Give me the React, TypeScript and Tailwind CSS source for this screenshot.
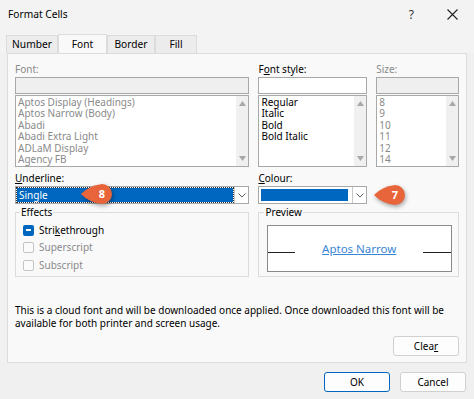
import React from "react";

const FONT = { fontFamily: '"Noto Sans", "Open Sans", sans-serif' };

function Scrollbar() {
  return (
    <div className="w-[12px] h-full bg-[#f0f0f0] flex flex-col items-center justify-between py-[5px]">
      <svg width="7" height="5" viewBox="0 0 7 5"><path d="M0 5 L3.5 0 L7 5 Z" fill="#a8a8a8" /></svg>
      <svg width="7" height="5" viewBox="0 0 7 5"><path d="M0 0 L3.5 5 L7 0 Z" fill="#a8a8a8" /></svg>
    </div>
  );
}

function ListBox({ items, dim }: { items: string[]; dim?: boolean }) {
  return (
    <div className="h-[72px] border border-[#a8a8a8] bg-white flex">
      <div className={`flex-1 pl-[2px] pt-[1px] leading-[11.4px] text-[10px] ${dim ? "text-[#8a8a8a]" : "text-black"}`}>
        {items.map((t) => (
          <div key={t} className="whitespace-nowrap">{t}</div>
        ))}
      </div>
      <Scrollbar />
    </div>
  );
}

function Chevron() {
  return (
    <div className="w-[14px] h-full bg-white border-l border-[#c8c8c8] flex items-center justify-center">
      <svg width="8" height="5" viewBox="0 0 8 5"><path d="M0.5 0.5 L4 4 L7.5 0.5" fill="none" stroke="#606060" strokeWidth="1" /></svg>
    </div>
  );
}

function Badge({ n, className }: { n: string; className: string }) {
  return (
    <div className={`absolute ${className} w-[32px] h-[20px]`}>
      <svg width="32" height="20" viewBox="0 0 32 20" className="absolute inset-0" style={{ filter: "drop-shadow(1px 2px 2px rgba(0,0,0,0.35))" }}>
        <path d="M0 10 Q 8 1.5 21 0 A 10 10 0 1 1 21 20 Q 8 18.5 0 10 Z" fill="#e8653b" />
      </svg>
      <span className="absolute left-[12px] top-0 w-[18px] h-[20px] flex items-center justify-center text-white text-[11px] font-bold">{n}</span>
    </div>
  );
}

function Label({ children, dim }: { children: React.ReactNode; dim?: boolean }) {
  return <div className={`h-[14px] text-[10px] leading-[14px] ${dim ? "text-[#8a8a8a]" : "text-black"}`}>{children}</div>;
}

export default function App() {
  return (
    <div className="w-[474px] h-[399px] bg-[#f0f0f0] relative overflow-hidden text-black" style={FONT}>
      {/* title */}
      <div className="h-[29px] flex items-center pl-[8px] pr-[16px] bg-[#f3f3f3]">
        <span className="text-[10.2px]">Format Cells</span>
        <div className="ml-auto flex items-center gap-[33px]">
          <span className="text-[12px] text-[#333]">?</span>
          <svg width="11" height="11" viewBox="0 0 11 11"><path d="M0.5 0.5 L10.5 10.5 M10.5 0.5 L0.5 10.5" stroke="#222" strokeWidth="1.1" /></svg>
        </div>
      </div>
      {/* tabs */}
      <div className="h-[24px] flex items-end pl-[6px] pt-[6px] bg-[#f3f3f3]">
        <div className="w-[52px] h-[18px] border border-[#dcdcdc] border-b-0 bg-[#ececec] text-[10.2px] flex items-center justify-center">Number</div>
        <div className="w-[49px] h-[20px] border border-[#dcdcdc] border-b-0 bg-[#f9f9f9] text-[10.2px] flex items-center justify-center relative top-[1px]">Font</div>
        <div className="w-[48px] h-[18px] border border-[#dcdcdc] border-b-0 bg-[#ececec] text-[10.2px] flex items-center justify-center">Border</div>
        <div className="w-[42px] h-[18px] border border-[#dcdcdc] border-b-0 bg-[#ececec] text-[10.2px] flex items-center justify-center">Fill</div>
      </div>
      {/* panel */}
      <div className="mx-[7px] h-[310px] border border-[#dcdcdc] bg-[#f9f9f9] pl-[7px] pr-[7px] pt-[8px] relative">
        <div className="flex gap-[9px]">
          <div className="w-[235px] flex flex-col">
            <Label dim>Font:</Label>
            <div className="mt-[1px] h-[17px] border border-[#a8a8a8] bg-[#efefef]" />
            <div className="mt-[1px]">
              <ListBox dim items={["Aptos Display (Headings)", "Aptos Narrow (Body)", "Abadi", "Abadi Extra Light", "ADLaM Display", "Agency FB"]} />
            </div>
            <div className="mt-[4px]"><Label><span className="underline">U</span>nderline:</Label></div>
            <div className="mt-[1px] h-[18px] border border-[#a8a8a8] bg-white flex">
              <div className="flex-1 m-[1px] bg-[#0067c0] text-white text-[10px] leading-[14px] pl-[2px] outline-1 outline-dotted outline-[#333]">Single</div>
              <Chevron />
            </div>
          </div>
          <div className="w-[109px] flex flex-col">
            <Label>F<span className="underline">o</span>nt style:</Label>
            <div className="mt-[1px] h-[17px] border border-[#a8a8a8] bg-white" />
            <div className="mt-[1px]">
              <ListBox items={["Regular", "Italic", "Bold", "Bold Italic"]} />
            </div>
            <div className="mt-[4px]"><Label><span className="underline">C</span>olour:</Label></div>
            <div className="mt-[1px] h-[18px] border border-[#a8a8a8] bg-white flex">
              <div className="flex-1 my-[2px] ml-[2px] mr-[4px] bg-[#0067c0]" />
              <Chevron />
            </div>
          </div>
          <div className="w-[83px] flex flex-col">
            <Label dim>Size:</Label>
            <div className="mt-[1px] h-[17px] border border-[#a8a8a8] bg-[#efefef]" />
            <div className="mt-[1px]">
              <ListBox dim items={["8", "9", "10", "11", "12", "14"]} />
            </div>
          </div>
        </div>
        {/* group boxes */}
        <div className="flex gap-[9px] mt-[8px]">
          <div className="w-[235px] h-[65px] border border-[#dcdcdc] relative pl-[7px] pt-[10px]">
            <span className="absolute left-[4px] top-[-8px] px-[1px] bg-[#f9f9f9] text-[10px] leading-[14px]">Effects</span>
            <div className="flex flex-col gap-[3.5px]">
              <div className="flex items-center gap-[5px] h-[14px]">
                <div className="w-[11px] h-[11px] rounded-[2px] bg-[#0067c0] flex items-center justify-center">
                  <div className="w-[5px] h-[1.5px] bg-white" />
                </div>
                <span className="text-[10px]">Stri<span className="underline">k</span>ethrough</span>
              </div>
              <div className="flex items-center gap-[5px] h-[14px]">
                <div className="w-[11px] h-[11px] rounded-[2px] border border-[#c4c4c4] bg-[#fbfbfb]" />
                <span className="text-[10px] text-[#8a8a8a]">Superscript</span>
              </div>
              <div className="flex items-center gap-[5px] h-[14px]">
                <div className="w-[11px] h-[11px] rounded-[2px] border border-[#c4c4c4] bg-[#fbfbfb]" />
                <span className="text-[10px] text-[#8a8a8a]">Subscript</span>
              </div>
            </div>
          </div>
          <div className="w-[201px] h-[65px] border border-[#dcdcdc] relative pt-[12px] pl-[8px] pr-[6px]">
            <span className="absolute left-[5px] top-[-8px] px-[1px] bg-[#f9f9f9] text-[10px] leading-[14px]">Preview</span>
            <div className="h-[47px] border border-[#8a8a8a] bg-white flex items-center">
              <div className="w-[27px] h-px bg-[#222] mt-[8px]" />
              <div className="flex-1 text-center text-[11.5px] text-[#3a86d6] underline">Aptos Narrow</div>
              <div className="w-[28px] h-px bg-[#222] mt-[8px]" />
            </div>
          </div>
        </div>
        <div className="mt-[27px] text-[10px] leading-[12.5px] whitespace-nowrap">
          This is a cloud font and will be downloaded once applied. Once downloaded this font will be<br />
          available for both printer and screen usage.
        </div>
        <div className="flex justify-end mt-[7px]">
          <div className="w-[66px] h-[20px] border border-[#d0d0d0] rounded-[3px] bg-[#fdfdfd] text-[10px] flex items-center justify-center">Clea<span className="underline">r</span></div>
        </div>
        <Badge n="8" className="left-[73px] top-[130px]" />
        <Badge n="7" className="left-[366px] top-[131px]" />
      </div>
      {/* bottom */}
      <div className="flex justify-end gap-[10px] pr-[8px] pt-[9px]">
        <div className="w-[66px] h-[20px] border border-[#0067c0] rounded-[3px] bg-[#fdfdfd] text-[10px] flex items-center justify-center">OK</div>
        <div className="w-[66px] h-[20px] border border-[#d0d0d0] rounded-[3px] bg-[#fdfdfd] text-[10px] flex items-center justify-center">Cancel</div>
      </div>
    </div>
  );
}
